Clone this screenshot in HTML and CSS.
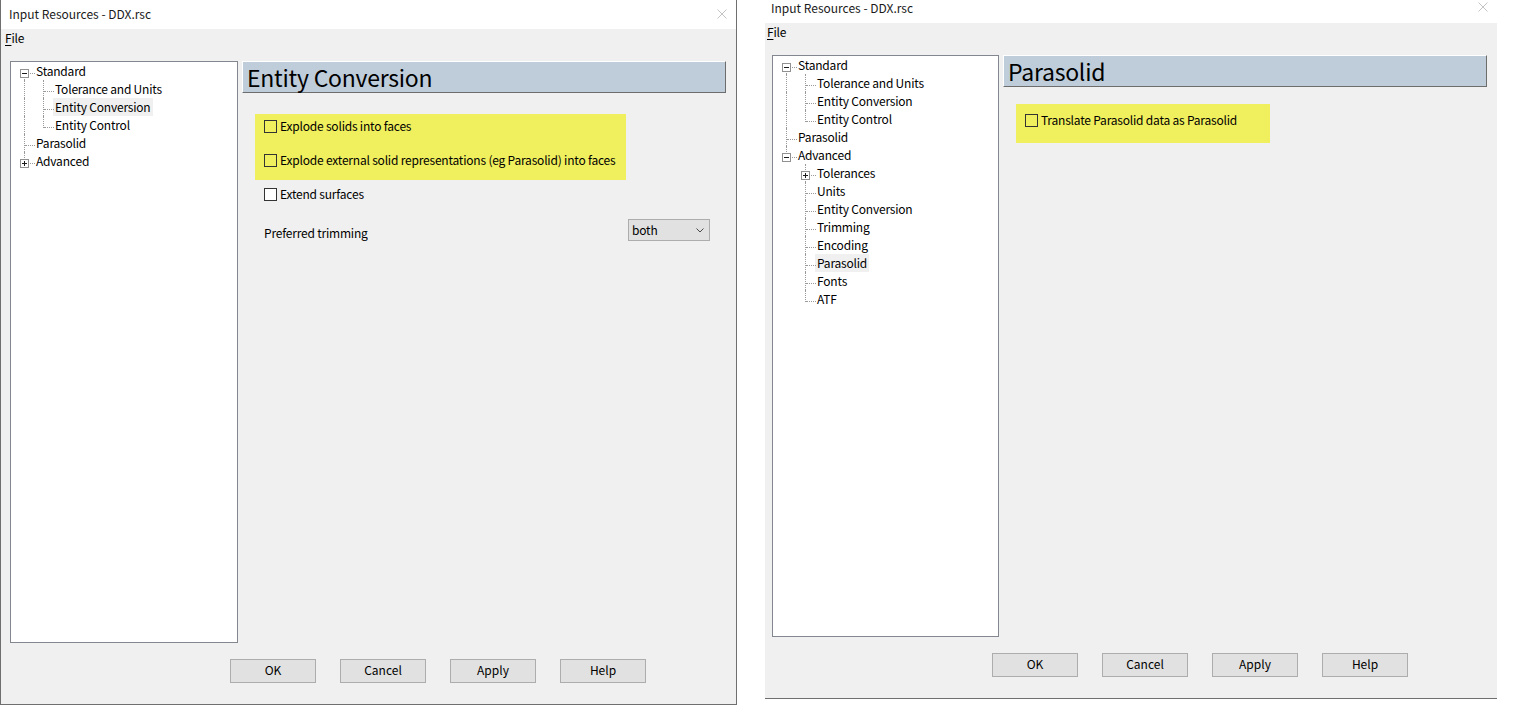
FILE: index.html
```html
<!DOCTYPE html>
<html>
<head>
<meta charset="utf-8">
<title>Input Resources - DDX.rsc</title>
<link rel="stylesheet" href="styles.css">
</head>
<body>
<div class="win win-a">
  <div class="titlebar">
    <span class="title">Input Resources - DDX.rsc</span>
    <svg class="close" width="10" height="10" viewBox="0 0 10 10"><path d="M0.5 0.5 L9.5 9.5 M9.5 0.5 L0.5 9.5" stroke="#c4c4c4" stroke-width="1" fill="none"/></svg>
  </div>
  <div class="client">
    <div class="menu"><span class="acc">F</span>ile</div>
    <div class="main">
      <div class="tree">
        <div class="row"><span class="c first"><span class="exp minus"></span></span><span class="lbl">Standard</span></div>
        <div class="row"><span class="c pipe"></span><span class="c tee"></span><span class="lbl">Tolerance and Units</span></div>
        <div class="row"><span class="c pipe"></span><span class="c tee"></span><span class="lbl sel">Entity Conversion</span></div>
        <div class="row"><span class="c pipe"></span><span class="c last"></span><span class="lbl">Entity Control</span></div>
        <div class="row"><span class="c tee"></span><span class="lbl">Parasolid</span></div>
        <div class="row"><span class="c last"><span class="exp plus"></span></span><span class="lbl">Advanced</span></div>
      </div>
      <div class="page">
        <div class="heading">Entity Conversion</div>
        <div class="hl hl-a">
          <div class="chk"><span class="box"></span><span>Explode solids into faces</span></div>
          <div class="chk"><span class="box"></span><span>Explode external solid representations (eg Parasolid) into faces</span></div>
        </div>
        <div class="chk chk-plain"><span class="box"></span><span>Extend surfaces</span></div>
        <div class="field">
          <span class="field-label">Preferred trimming</span>
          <div class="select"><span>both</span><svg class="chev" width="8" height="5" viewBox="0 0 8 5"><path d="M0.5 0.5 L4 4 L7.5 0.5" stroke="#4a4a4a" stroke-width="1" fill="none"/></svg></div>
        </div>
      </div>
    </div>
    <div class="buttons">
      <div class="btn">OK</div>
      <div class="btn">Cancel</div>
      <div class="btn">Apply</div>
      <div class="btn">Help</div>
    </div>
  </div>
</div>

<div class="win win-b">
  <div class="titlebar">
    <span class="title">Input Resources - DDX.rsc</span>
    <svg class="close" width="10" height="10" viewBox="0 0 10 10"><path d="M0.5 0.5 L9.5 9.5 M9.5 0.5 L0.5 9.5" stroke="#c4c4c4" stroke-width="1" fill="none"/></svg>
  </div>
  <div class="client">
    <div class="menu"><span class="acc">F</span>ile</div>
    <div class="main">
      <div class="tree">
        <div class="row"><span class="c first"><span class="exp minus"></span></span><span class="lbl">Standard</span></div>
        <div class="row"><span class="c pipe"></span><span class="c tee"></span><span class="lbl">Tolerance and Units</span></div>
        <div class="row"><span class="c pipe"></span><span class="c tee"></span><span class="lbl">Entity Conversion</span></div>
        <div class="row"><span class="c pipe"></span><span class="c last"></span><span class="lbl">Entity Control</span></div>
        <div class="row"><span class="c tee"></span><span class="lbl">Parasolid</span></div>
        <div class="row"><span class="c last"><span class="exp minus"></span></span><span class="lbl">Advanced</span></div>
        <div class="row"><span class="c"></span><span class="c tee"><span class="exp plus"></span></span><span class="lbl">Tolerances</span></div>
        <div class="row"><span class="c"></span><span class="c tee"></span><span class="lbl">Units</span></div>
        <div class="row"><span class="c"></span><span class="c tee"></span><span class="lbl">Entity Conversion</span></div>
        <div class="row"><span class="c"></span><span class="c tee"></span><span class="lbl">Trimming</span></div>
        <div class="row"><span class="c"></span><span class="c tee"></span><span class="lbl">Encoding</span></div>
        <div class="row"><span class="c"></span><span class="c tee"></span><span class="lbl sel">Parasolid</span></div>
        <div class="row"><span class="c"></span><span class="c tee"></span><span class="lbl">Fonts</span></div>
        <div class="row"><span class="c"></span><span class="c last"></span><span class="lbl">ATF</span></div>
      </div>
      <div class="page">
        <div class="heading">Parasolid</div>
        <div class="hl hl-b">
          <div class="chk"><span class="box"></span><span>Translate Parasolid data as Parasolid</span></div>
        </div>
      </div>
    </div>
    <div class="buttons">
      <div class="btn">OK</div>
      <div class="btn">Cancel</div>
      <div class="btn">Apply</div>
      <div class="btn">Help</div>
    </div>
  </div>
</div>
</body>
</html>
```
FILE: styles.css
```css
* { box-sizing: border-box; }
html, body { margin: 0; padding: 0; background: #ffffff; }
body {
  display: flex;
  align-items: flex-start;
  width: 1531px;
  height: 724px;
  overflow: hidden;
  font-family: "Noto Sans CJK KR", "Noto Sans", sans-serif;
  font-size: 12px;
  letter-spacing: -0.2px;
  color: #000;
}

/* windows */
.win { display: flex; flex-direction: column; background: #ffffff; }
.win-a { width: 737px; border: 1px solid #6f6f6f; border-top: none; }
.win-b { width: 732px; margin-left: 28px; border-bottom: 1px solid #6f6f6f; }

.titlebar {
  display: flex;
  justify-content: space-between;
  align-items: flex-start;
  background: #ffffff;
  line-height: 16px;
  color: #1a1a1a;
  letter-spacing: 0;
}
.win-a .titlebar { height: 29px; padding: 6px 9px 0 8px; }
.win-a .close { margin-top: 3px; }
.win-b .titlebar { height: 23px; padding: 0 9px 0 6px; }
.win-b .close { margin-top: 2px; }

.client { background: #f0f0f0; padding-right: 10px; }
.win-a .client { padding-left: 9px; }
.win-b .client { padding-left: 7px; }

.menu { height: 18px; line-height: 18px; margin-left: -5px; }
.acc { text-decoration: underline; text-underline-offset: 2px; }

.main { display: flex; align-items: flex-start; gap: 4px; margin-top: 14px; }

/* tree */
.tree {
  width: 229px;
  height: 582px;
  border: 1px solid #828790;
  background: #ffffff;
  padding: 0 0 0 6px;
}
.row { display: flex; height: 18px; align-items: stretch; }
.c { position: relative; width: 19px; flex: none; }
.c.first::before, .c.tee::before, .c.pipe::before, .c.last::before {
  content: "";
  position: absolute;
  left: 7px;
  border-left: 1px dotted #9a9a9a;
}
.c.pipe::before, .c.tee::before { top: 0; bottom: 0; }
.c.first::before { top: 11px; bottom: 0; }
.c.last::before { top: 0; height: 12px; }
.c.first::after, .c.tee::after, .c.last::after {
  content: "";
  position: absolute;
  left: 8px;
  width: 10px;
  top: 11px;
  border-top: 1px dotted #9a9a9a;
}
.exp {
  position: absolute;
  left: 3px;
  top: 7px;
  width: 9px;
  height: 9px;
  border: 1px solid #919191;
  background: #ffffff;
  z-index: 1;
}
.exp::before {
  content: "";
  position: absolute;
  left: 1px;
  top: 3px;
  width: 5px;
  height: 1px;
  background: #1c1c1c;
}
.exp.plus::after {
  content: "";
  position: absolute;
  left: 3px;
  top: 1px;
  width: 1px;
  height: 5px;
  background: #1c1c1c;
}
.lbl { line-height: 18px; padding: 0 2px; margin-left: -2px; white-space: nowrap; }
.lbl.sel { background: #f0f0f0; }

/* page */
.page { width: 484px; display: flex; flex-direction: column; align-items: flex-start; }
.heading {
  width: 484px;
  height: 32px;
  background: #bfcddb;
  border-top: 1px solid #ffffff;
  border-left: 1px solid #ffffff;
  border-right: 1px solid #6d6d6d;
  border-bottom: 1px solid #6d6d6d;
  font-size: 23px;
  letter-spacing: -0.25px;
  line-height: 30px;
  padding-left: 4px;
  white-space: nowrap;
}

.hl { background: #f0ef5d; display: flex; flex-direction: column; gap: 16px; margin-left: 13px; }
.hl-a { width: 371px; margin-top: 21px; padding: 3px 0 11px 9px; }
.hl-b { width: 254px; margin-top: 17px; padding: 7px 0 14px 9px; }

.chk { display: flex; align-items: center; height: 18px; line-height: 18px; white-space: nowrap; }
.box {
  width: 13px;
  height: 13px;
  border: 1px solid #333333;
  margin-right: 3px;
  flex: none;
}
.chk-plain { margin: 5px 0 0 22px; }
.chk-plain .box { background: #ffffff; }

.field {
  display: flex;
  justify-content: space-between;
  align-items: flex-start;
  width: 446px;
  margin: 16px 0 0 22px;
}
.field-label { padding-top: 5px; line-height: 18px; }
.select {
  width: 82px;
  height: 22px;
  border: 1px solid #adadad;
  background: #e1e1e1;
  display: flex;
  align-items: center;
  justify-content: space-between;
  padding: 0 5px 0 3px;
  line-height: 18px;
}

/* buttons */
.buttons { display: flex; gap: 24px; margin-top: 16px; padding: 0 0 21px 220px; }
.btn {
  width: 86px;
  height: 24px;
  border: 1px solid #adadad;
  background: #e1e1e1;
  text-align: center;
  line-height: 20px;
  letter-spacing: 0;
}
```
